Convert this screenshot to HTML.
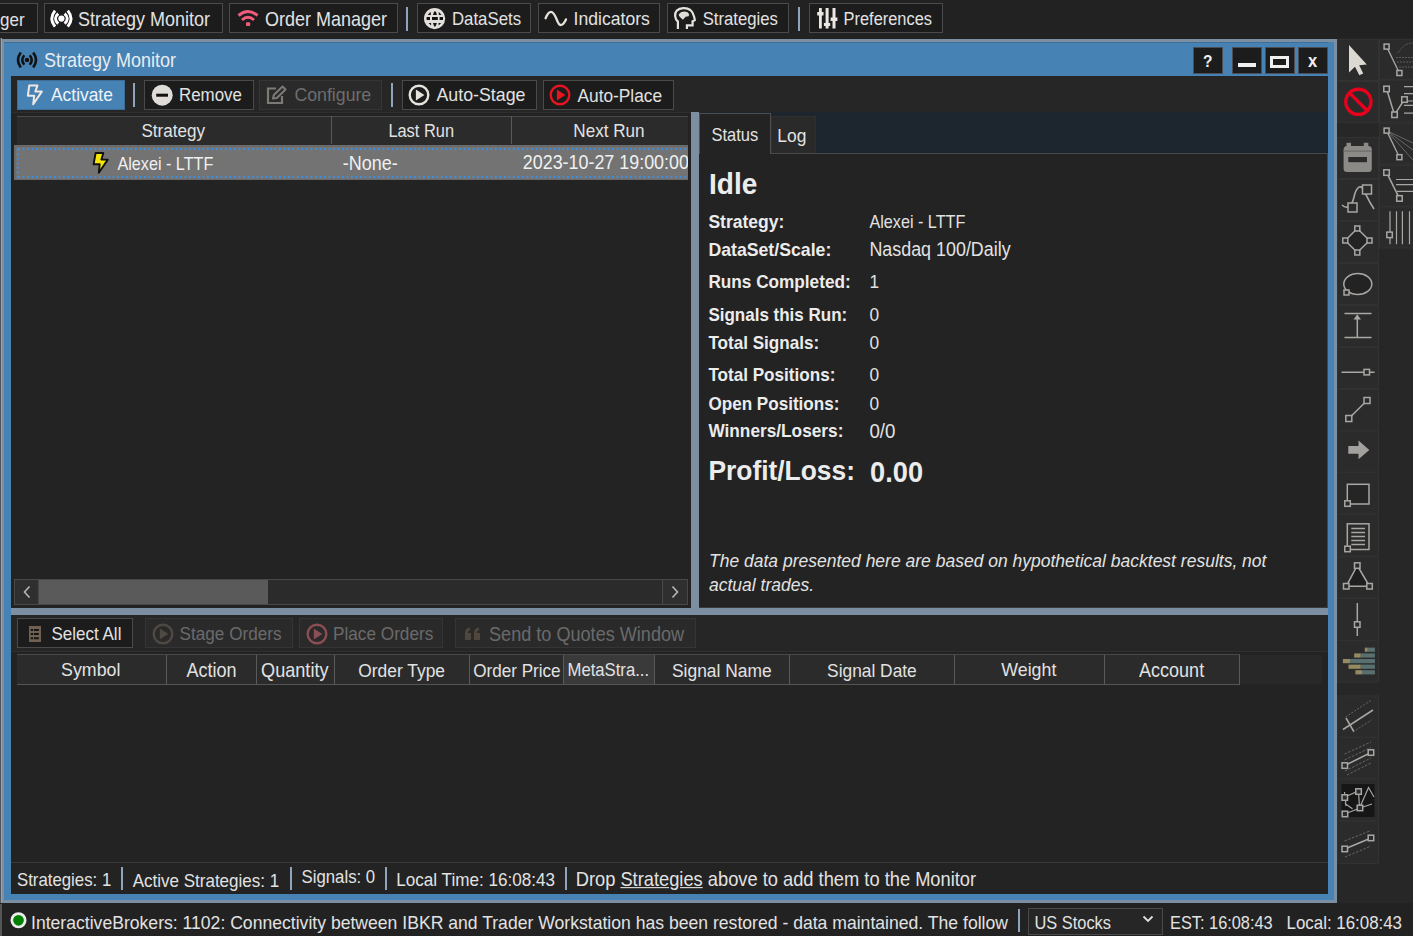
<!DOCTYPE html>
<html><head><meta charset="utf-8">
<style>
*{box-sizing:border-box;margin:0;padding:0}
html,body{width:1413px;height:936px;overflow:hidden;background:#222222;font-family:"Liberation Sans",sans-serif;color:#e2e2e2;font-size:17px}
.a{position:absolute}
.t,.lbl,.val{transform:scaleY(1.08);transform-origin:0 0.13em}
.t{position:absolute;white-space:nowrap;line-height:1}
.btn{position:absolute;background:#1c1c1c;border:1px solid #4a4a4a}
.dis{position:absolute;background:#2a2a2a;border:1px solid #353535}
.sep{position:absolute;width:2px;background:#8fa4bd}
svg{position:absolute;overflow:visible}
.hd{position:absolute;background:#2b2b2b;border-right:1px solid #555}
.lbl{position:absolute;white-space:nowrap;line-height:1;font-weight:bold;font-size:17px;color:#ececec}
.val{position:absolute;white-space:nowrap;line-height:1;font-size:17px;color:#e2e2e2}
</style></head><body>

<!-- ===== top toolbar ===== -->
<div class="btn" style="left:-2px;top:3px;width:40px;height:30px"></div>
<div class="t" style="left:0px;top:10.8px;font-size:17px">ger</div>

<div class="btn" style="left:44px;top:3px;width:179px;height:30px"></div>
<svg style="left:44px;top:3px" width="40" height="30" viewBox="0 0 40 30">
 <circle cx="17.4" cy="15.6" r="3.1" fill="#fff"/>
 <path d="M14.2 10.6 Q8.8 15.6 14.2 20.6 M20.6 10.6 Q26 15.6 20.6 20.6" stroke="#fff" stroke-width="2.9" fill="none"/>
 <path d="M11 7.6 Q4.6 15.6 11 23.6 M23.8 7.6 Q30.2 15.6 23.8 23.6" stroke="#fff" stroke-width="2.9" fill="none"/>
</svg>
<div class="t" style="left:78px;top:9.9px;font-size:18px">Strategy Monitor</div>

<div class="btn" style="left:229px;top:3px;width:169px;height:30px"></div>
<svg style="left:237px;top:10px" width="22" height="16" viewBox="0 0 22 16">
 <path d="M1.5 5.5 Q11 -2.5 20.5 5.5" stroke="#f25c7c" stroke-width="3" fill="none"/>
 <path d="M5 10 Q11 4.5 17 10" stroke="#f25c7c" stroke-width="3" fill="none"/>
 <rect x="9" y="12.3" width="4.2" height="3.6" rx="1" fill="#f25c7c"/>
</svg>
<div class="t" style="left:265px;top:9.9px;font-size:18px">Order Manager</div>

<div class="sep" style="left:406px;top:7px;height:24px"></div>

<div class="btn" style="left:417px;top:3px;width:114px;height:30px"></div>
<svg style="left:417px;top:3px" width="40" height="30" viewBox="0 0 40 30">
 <circle cx="17.6" cy="15.6" r="10.6" fill="#e3e0dc"/>
 <path d="M10.8 11.9 L13.6 8.8 L13.9 11.9 Z M16 11.9 L16.8 9.2 L17.9 7.9 L19.2 9.2 L19.9 11.9 Z M21.6 8.8 L24.6 11.9 L21.9 11.9 Z M9.6 14.1 H13 V17.1 H9.6 Z M15 14.1 H20.8 V17.1 H15 Z M22.6 14.1 H26 V17.1 H22.6 Z M11.6 19.9 H14.1 L14.1 22.4 Z M16 19.9 H19.9 L19 22.5 L17.9 23.9 L16.8 22.5 Z M21.6 19.9 H24.1 L21.6 22.4 Z" fill="#131313"/>
</svg>
<div class="t" style="left:452px;top:11.0px;font-size:16.8px">DataSets</div>

<div class="btn" style="left:538px;top:3px;width:122px;height:30px"></div>
<svg style="left:538px;top:3px" width="40" height="30" viewBox="0 0 40 30">
 <path d="M7.6 15.2 C9.3 11 11 8.9 13.1 8.9 C15.5 8.9 17 12.5 18.5 16 C20 20 21 22 22.6 22 C24.6 22 26.5 19.5 28 16.4" stroke="#e6e3de" stroke-width="2.3" fill="none" stroke-linecap="round"/>
</svg>
<div class="t" style="left:573.6px;top:10.3px;font-size:17.6px">Indicators</div>

<div class="btn" style="left:667px;top:3px;width:122px;height:30px"></div>
<svg style="left:667px;top:3px" width="40" height="30" viewBox="0 0 40 30">
 <path d="M10.9 26 V18.5 C7.6 16 7.2 10.5 9.8 7.6 C12.8 4.6 19.5 4.2 23.3 7 C26.2 9.3 27.2 13 27.8 17.2 L25.6 18.3 V22.4 H19.9 V26" stroke="#e6e3de" stroke-width="2.2" fill="none"/>
 <path d="M11.8 11.3 L14.3 8.9 L17.6 8.4 L20.6 9.3 L22.2 11.4 L21.6 13.2 L18.6 13.7 L16 16.8 L14.2 15.2 L11.9 12.7 Z" fill="#e0ddd8"/>
</svg>
<div class="t" style="left:702.7px;top:11.1px;font-size:16.7px">Strategies</div>

<div class="sep" style="left:798px;top:7px;height:24px"></div>

<div class="btn" style="left:809px;top:3px;width:134px;height:30px"></div>
<svg style="left:816px;top:8px" width="22" height="20" viewBox="0 0 22 20">
 <rect x="3" y="0" width="2.8" height="20.5" fill="#ebe8e3"/>
 <rect x="9.6" y="0" width="3" height="20.5" fill="#ebe8e3"/>
 <rect x="16.5" y="0" width="3" height="20.5" fill="#ebe8e3"/>
 <rect x="1.2" y="4" width="6.3" height="3.5" fill="#ebe8e3"/>
 <rect x="7.9" y="15" width="6.3" height="3" fill="#ebe8e3"/>
 <rect x="14.6" y="9.5" width="6.8" height="3.5" fill="#ebe8e3"/>
</svg>
<div class="t" style="left:843.6px;top:10.4px;font-size:16.4px">Preferences</div>

<!-- ===== window frame ===== -->
<div class="a" style="left:0px;top:38px;width:1px;height:866px;background:#4f555b"></div><div class="a" style="left:1px;top:38px;width:1px;height:866px;background:#98a4b0"></div>
<div class="a" style="left:2px;top:39px;width:1335px;height:864px;background:#7b8ea2"></div>
<div class="a" style="left:4px;top:42px;width:1330px;height:858px;background:#4682b4"></div>
<div class="a" style="left:11px;top:76px;width:1317px;height:818px;background:#232323"></div>
<div class="a" style="left:11px;top:76px;width:1317px;height:36px;background:#262626"></div>
<div class="a" style="left:4px;top:42px;width:1324px;height:1px;background:#3e6e9a"></div>

<!-- title -->
<svg style="left:10px;top:45px" width="40" height="30" viewBox="0 0 40 30">
 <circle cx="17" cy="15" r="2.3" fill="#111"/>
 <path d="M14.3 10.3 Q10.2 15 14.3 19.7 M19.7 10.3 Q23.8 15 19.7 19.7" stroke="#111" stroke-width="2.5" fill="none"/>
 <path d="M10.8 7.5 Q5.2 15 10.8 22.5 M23.2 7.5 Q28.8 15 23.2 22.5" stroke="#111" stroke-width="2.6" fill="none"/>
</svg>
<div class="t" style="left:44px;top:50.9px;font-size:18px;color:#e8ecf0">Strategy Monitor</div>

<div class="btn" style="left:1193px;top:47px;width:30px;height:27px;border:1.5px solid #4b4f55"></div>
<div class="t" style="left:1203px;top:53px;font-size:15.5px;font-weight:bold;color:#f0f0f0">?</div>
<div class="btn" style="left:1232px;top:47px;width:30px;height:27px;border:1.5px solid #4b4f55"></div>
<div class="a" style="left:1238px;top:63px;width:18px;height:4px;background:#f0f0f0"></div>
<div class="btn" style="left:1265px;top:47px;width:30px;height:27px;border:1.5px solid #4b4f55"></div>
<div class="a" style="left:1270px;top:56px;width:19px;height:12px;border:3px solid #f0f0f0"></div>
<div class="btn" style="left:1298px;top:47px;width:30px;height:27px;border:1.5px solid #4b4f55"></div>
<div class="t" style="left:1308px;top:52px;font-size:16.5px;font-weight:bold;color:#f0f0f0">x</div>


<!-- ===== window toolbar ===== -->
<div class="a" style="left:17px;top:80px;width:108px;height:30px;background:#4682b4;border:1.5px solid #3b6d98"></div>
<svg style="left:26px;top:84px" width="18" height="23" viewBox="0 0 18 23">
 <path d="M3.2 1.6 H11.4 L9.3 7.6 H15.8 L7.2 20.3 L8.2 11.7 H1.9 Z" stroke="#efe9e4" stroke-width="2" fill="none" stroke-linejoin="round"/>
</svg>
<div class="t" style="left:51px;top:85.5px;font-size:17.4px;color:#eef2f6">Activate</div>
<div class="sep" style="left:133px;top:83px;height:24px"></div>

<div class="btn" style="left:144px;top:80px;width:110px;height:30px"></div>
<svg style="left:151px;top:84px" width="22" height="22" viewBox="0 0 22 22">
 <circle cx="11.2" cy="11.2" r="10.5" fill="#e0ddd9"/>
 <rect x="5.2" y="9.7" width="11.8" height="3" fill="#111"/>
</svg>
<div class="t" style="left:179px;top:86.9px;font-size:16.9px">Remove</div>

<div class="dis" style="left:259px;top:80px;width:123px;height:30px"></div>
<svg style="left:266px;top:85px" width="22" height="20" viewBox="0 0 22 20">
 <path d="M10 3.5 H2 V18 H16 V11" stroke="#7d7a76" stroke-width="2.2" fill="none"/>
 <path d="M7 13.5 L7.8 10 L16.5 1.5 L19.5 4.5 L10.8 13 Z" stroke="#7d7a76" stroke-width="2" fill="none" stroke-linejoin="round"/>
</svg>
<div class="t" style="left:294.5px;top:86.2px;font-size:17.7px;color:#6e6e6e">Configure</div>
<div class="sep" style="left:391px;top:83px;height:24px"></div>

<div class="btn" style="left:402px;top:80px;width:135px;height:30px"></div>
<svg style="left:408px;top:84px" width="22" height="22" viewBox="0 0 22 22">
 <circle cx="11" cy="11" r="9.3" stroke="#e6e2dc" stroke-width="2.4" fill="none"/>
 <path d="M7.9 5.6 L16.4 11 L7.9 16.4 Z" fill="#e6e2dc"/>
</svg>
<div class="t" style="left:436.5px;top:86.1px;font-size:17.8px">Auto-Stage</div>

<div class="btn" style="left:543px;top:80px;width:131px;height:30px"></div>
<svg style="left:549px;top:84px" width="22" height="22" viewBox="0 0 22 22">
 <circle cx="11" cy="11" r="9.3" stroke="#e8141e" stroke-width="2.4" fill="none"/>
 <path d="M7.9 5.6 L16.4 11 L7.9 16.4 Z" fill="#e8141e"/>
</svg>
<div class="t" style="left:577.5px;top:86.6px;font-size:17.3px">Auto-Place</div>

<div class="a" style="left:11px;top:112px;width:680px;height:1px;background:#2e2e2e"></div>

<!-- ===== left table ===== -->
<div class="a" style="left:11px;top:113px;width:680px;height:495px;background:#232323"></div>
<div class="a" style="left:17px;top:116px;width:671px;height:30px;background:#2b2b2b;border-top:1px solid #4a4a4a;border-bottom:1px solid #555"></div>
<div class="a" style="left:331px;top:116px;width:1px;height:28px;background:#5a5a5a"></div>
<div class="a" style="left:511px;top:116px;width:1px;height:28px;background:#5a5a5a"></div>
<div class="t" style="left:141.4px;top:121.7px;font-size:17.1px">Strategy</div>
<div class="t" style="left:388.4px;top:122.4px;font-size:16.4px">Last Run</div>
<div class="t" style="left:573.3px;top:121.7px;font-size:17.1px">Next Run</div>

<div class="a" style="left:14px;top:145px;width:674px;height:35px;background:#6a6a6a;overflow:hidden">
 <div class="a" style="left:2px;top:2px;width:700px;height:32px;background:#737373;"></div>
 <svg style="left:0;top:0" width="674" height="35"><path d="M4 4 H674 M4 32 H674 M4 4 V32" stroke="#3d8fe6" stroke-width="1.8" stroke-dasharray="1.8 2.7" fill="none"/></svg>
</div>
<svg style="left:91px;top:151px" width="20" height="24" viewBox="0 0 20 24">
 <path d="M4.6 2 H12.3 L10.4 8.6 H16.8 L7.8 21.8 L8.7 13.2 H2.6 Z" fill="#f7e600" stroke="#111" stroke-width="1.9" stroke-linejoin="round"/>
</svg>
<div class="t" style="left:117.4px;top:154.5px;font-size:16.2px;color:#f0f0f0">Alexei - LTTF</div>
<div class="t" style="left:342.7px;top:153.9px;font-size:18px;color:#f0f0f0">-None-</div>
<div style="position:absolute;left:511px;top:146px;width:177px;height:32px;overflow:hidden">
 <div class="t" style="left:11.8px;top:8.2px;font-size:17.9px;color:#f0f0f0">2023-10-27 19:00:00</div>
</div>

<!-- scrollbar -->
<div class="a" style="left:14px;top:579px;width:674px;height:26px;background:#2b2b2b;border:1px solid #484848"></div>
<div class="a" style="left:15px;top:580px;width:24px;height:24px;background:#2f2f2f;border-right:1px solid #484848"></div>
<div class="a" style="left:39px;top:580px;width:229px;height:24px;background:#5a5a5a"></div>
<div class="a" style="left:662px;top:580px;width:25px;height:24px;background:#2f2f2f;border-left:1px solid #484848"></div>
<svg style="left:22px;top:585px" width="10" height="14" viewBox="0 0 10 14"><path d="M7.5 1.5 L2.5 7 L7.5 12.5" stroke="#b9b9b9" stroke-width="1.6" fill="none"/></svg>
<svg style="left:670px;top:585px" width="10" height="14" viewBox="0 0 10 14"><path d="M2.5 1.5 L7.5 7 L2.5 12.5" stroke="#b9b9b9" stroke-width="1.6" fill="none"/></svg>

<!-- vertical splitter -->
<div class="a" style="left:691px;top:112px;width:8px;height:496px;background:#7b8ea2"></div>

<!-- ===== right pane ===== -->
<div class="a" style="left:699px;top:112px;width:629px;height:42px;background:#1d262f"></div>
<div class="a" style="left:699px;top:153px;width:629px;height:455px;background:#232323;border-top:1px solid #4a4a4a;border-right:1px solid #474747;border-bottom:1px solid #3a3a3a"></div>
<div class="a" style="left:699px;top:113px;width:72px;height:41px;background:#232323;border:1px solid #4f4f4f;border-bottom:none"></div>
<div class="a" style="left:771px;top:116px;width:45px;height:37px;background:#2a2a2a;border:1px solid #2f2f2f;border-bottom:none"></div>
<div class="t" style="left:711.5px;top:125.6px;font-size:16.5px">Status</div>
<div class="t" style="left:777.3px;top:126.5px;font-size:17.4px">Log</div>

<div class="t" style="left:709px;top:168.6px;font-size:28px;font-weight:bold;color:#ececec">Idle</div>
<div class="lbl" style="left:708.4px;top:212.7px;font-size:17.5px">Strategy:</div>
<div class="val" style="left:869.4px;top:212.7px;font-size:16.2px">Alexei - LTTF</div>
<div class="lbl" style="left:708.4px;top:241.2px;font-size:17.7px">DataSet/Scale:</div>
<div class="val" style="left:869.4px;top:241.2px;font-size:17.9px">Nasdaq 100/Daily</div>
<div class="lbl" style="left:708.4px;top:273.4px;font-size:17.2px">Runs Completed:</div>
<div class="val" style="left:869.4px;top:273.4px;font-size:17.3px">1</div>
<div class="lbl" style="left:708.4px;top:306.3px;font-size:17px">Signals this Run:</div>
<div class="val" style="left:869.4px;top:306.3px;font-size:17.3px">0</div>
<div class="lbl" style="left:708.4px;top:334.3px;font-size:17.1px">Total Signals:</div>
<div class="val" style="left:869.4px;top:334.3px;font-size:17.3px">0</div>
<div class="lbl" style="left:708.4px;top:365.7px;font-size:17.1px">Total Positions:</div>
<div class="val" style="left:869.4px;top:365.7px;font-size:17.3px">0</div>
<div class="lbl" style="left:708.4px;top:394.5px;font-size:17.1px">Open Positions:</div>
<div class="val" style="left:869.4px;top:394.5px;font-size:17.3px">0</div>
<div class="lbl" style="left:708.4px;top:422px;font-size:17.25px">Winners/Losers:</div>
<div class="val" style="left:869.4px;top:422px;font-size:18.7px">0/0</div>
<div class="lbl" style="left:708.4px;top:456.6px;font-size:26.4px">Profit/Loss:</div>
<div class="lbl" style="left:870.1px;top:456.6px;font-size:27.2px">0.00</div>

<div class="t" style="left:709px;top:551.9px;font-size:17.5px;font-style:italic">The data presented here are based on hypothetical backtest results, not</div>
<div class="t" style="left:709px;top:576.2px;font-size:17.5px;font-style:italic">actual trades.</div>

<!-- horizontal splitter -->
<div class="a" style="left:11px;top:608px;width:1317px;height:7px;background:#7b8ea2"></div>

<!-- ===== bottom pane ===== -->
<div class="a" style="left:11px;top:615px;width:1317px;height:36px;background:#262626"></div>
<div class="btn" style="left:17px;top:618px;width:116px;height:30px"></div>
<svg style="left:27px;top:624px" width="16" height="20" viewBox="0 0 16 20">
 <rect x="2" y="2" width="12" height="16" fill="#6f604f"/>
 <path d="M3.7 5.9 h2.4 M7 5.9 h4.8 M3.7 9.9 h2.4 M7 9.9 h4.8 M3.7 14.2 h2.4 M7 14.2 h4.8" stroke="#141414" stroke-width="2"/>
</svg>
<div class="t" style="left:51.5px;top:624.8px;font-size:17px">Select All</div>

<div class="dis" style="left:145px;top:618px;width:148px;height:30px"></div>
<svg style="left:152px;top:623px" width="22" height="22" viewBox="0 0 22 22">
 <circle cx="11" cy="11" r="9.3" stroke="#4f4943" stroke-width="2.4" fill="none"/>
 <path d="M7.8 5.6 L16.3 11 L7.8 16.4 Z" fill="#4f4943"/>
</svg>
<div class="t" style="left:179.6px;top:624.7px;font-size:17.15px;color:#6a6a6a">Stage Orders</div>

<div class="dis" style="left:299px;top:618px;width:144px;height:30px"></div>
<svg style="left:306px;top:623px" width="22" height="22" viewBox="0 0 22 22">
 <circle cx="11" cy="11" r="9.3" stroke="#8a4e54" stroke-width="2.4" fill="none"/>
 <path d="M7.8 5.6 L16.3 11 L7.8 16.4 Z" fill="#8a4e54"/>
</svg>
<div class="t" style="left:333px;top:624.6px;font-size:17.2px;color:#6a6a6a">Place Orders</div>

<div class="dis" style="left:455px;top:618px;width:241px;height:30px"></div>
<svg style="left:464px;top:627px" width="20" height="14" viewBox="0 0 20 14">
 <path d="M1 13 V6 Q1 1 6 0.5 V3 Q3.8 3.5 3.8 6 H7 V13 Z M10 13 V6 Q10 1 15 0.5 V3 Q12.8 3.5 12.8 6 H16 V13 Z" fill="#4f473d"/>
</svg>
<div class="t" style="left:489px;top:624.8px;font-size:18.1px;color:#6a6a6a">Send to Quotes Window</div>

<div class="a" style="left:11px;top:651px;width:1317px;height:1px;background:#2f2f2f"></div>

<!-- grid header -->
<div class="a" style="left:17px;top:655px;width:1305px;height:29px;background:#282828"></div>
<div class="a" style="left:17px;top:654px;width:1223px;height:31px;background:#2b2b2b;border-top:1px solid #4a4a4a;border-bottom:1px solid #555"></div>
<div class="a" style="left:564px;top:655px;width:90px;height:29px;background:#3a3a3a"></div>
<div class="a" style="left:166px;top:655px;width:1px;height:29px;background:#5a5a5a"></div>
<div class="a" style="left:256px;top:655px;width:1px;height:29px;background:#5a5a5a"></div>
<div class="a" style="left:334px;top:655px;width:1px;height:29px;background:#5a5a5a"></div>
<div class="a" style="left:469px;top:655px;width:1px;height:29px;background:#5a5a5a"></div>
<div class="a" style="left:563px;top:655px;width:1px;height:29px;background:#5a5a5a"></div>
<div class="a" style="left:654px;top:655px;width:1px;height:29px;background:#5a5a5a"></div>
<div class="a" style="left:789px;top:655px;width:1px;height:29px;background:#5a5a5a"></div>
<div class="a" style="left:954px;top:655px;width:1px;height:29px;background:#5a5a5a"></div>
<div class="a" style="left:1104px;top:655px;width:1px;height:29px;background:#5a5a5a"></div>
<div class="a" style="left:1239px;top:655px;width:1px;height:29px;background:#5a5a5a"></div>
<div class="t" style="left:61.1px;top:661.1px;font-size:17.8px">Symbol</div>
<div class="t" style="left:186.5px;top:660.9px;font-size:18px">Action</div>
<div class="t" style="left:261.1px;top:660.8px;font-size:18.1px">Quantity</div>
<div class="t" style="left:358.3px;top:661.5px;font-size:17.4px">Order Type</div>
<div class="t" style="left:473.2px;top:661.7px;font-size:17.1px">Order Price</div>
<div class="t" style="left:567.5px;top:662.1px;font-size:16.7px">MetaStra...</div>
<div class="t" style="left:672px;top:661.5px;font-size:17.4px">Signal Name</div>
<div class="t" style="left:827.1px;top:661.5px;font-size:17.35px">Signal Date</div>
<div class="t" style="left:1001.3px;top:661.1px;font-size:17.8px">Weight</div>
<div class="t" style="left:1139.1px;top:660.9px;font-size:18px">Account</div>

<!-- window status bar -->
<div class="a" style="left:11px;top:862px;width:1317px;height:32px;background:#232323;border-top:1px solid #3a3a3a"></div>
<div class="t" style="left:17px;top:872.0px;font-size:16.8px">Strategies: 1</div>
<div class="sep" style="left:121px;top:867px;height:23px"></div>
<div class="t" style="left:132.7px;top:871.8px;font-size:17px">Active Strategies: 1</div>
<div class="sep" style="left:290px;top:867px;height:23px"></div>
<div class="t" style="left:301.5px;top:869.0px;font-size:16.8px">Signals: 0</div>
<div class="sep" style="left:385px;top:867px;height:23px"></div>
<div class="t" style="left:396.3px;top:870.7px;font-size:17.1px">Local Time: 16:08:43</div>
<div class="sep" style="left:564.5px;top:867px;height:23px"></div>
<div class="t" style="left:575.7px;top:869.6px;font-size:18.3px">Drop <span style="text-decoration:underline">Strategies</span> above to add them to the Monitor</div>


<!-- ===== right toolbar ===== -->
<div class="a" style="left:1337px;top:39px;width:76px;height:864px;background:#272727"></div>
<svg style="left:0;top:0" width="1413" height="936" viewBox="0 0 1413 936"><rect x="1337.5" y="39.3" width="41" height="41.2" fill="#2b2b2b" stroke="#323232" stroke-width="1"/><rect x="1337.5" y="81.5" width="41" height="40.9" fill="#2b2b2b" stroke="#323232" stroke-width="1"/><rect x="1337.5" y="137.5" width="41" height="41.0" fill="#2b2b2b" stroke="#323232" stroke-width="1"/><rect x="1337.5" y="179.5" width="41" height="41.0" fill="#2b2b2b" stroke="#323232" stroke-width="1"/><rect x="1337.5" y="221.3" width="41" height="41.0" fill="#2b2b2b" stroke="#323232" stroke-width="1"/><rect x="1337.5" y="263.5" width="41" height="41.0" fill="#2b2b2b" stroke="#323232" stroke-width="1"/><rect x="1337.5" y="305.8" width="41" height="41.0" fill="#2b2b2b" stroke="#323232" stroke-width="1"/><rect x="1337.5" y="347.5" width="41" height="41.0" fill="#2b2b2b" stroke="#323232" stroke-width="1"/><rect x="1337.5" y="389.4" width="41" height="41.2" fill="#2b2b2b" stroke="#323232" stroke-width="1"/><rect x="1337.5" y="430.8" width="41" height="41.4" fill="#2b2b2b" stroke="#323232" stroke-width="1"/><rect x="1337.5" y="472.3" width="41" height="41.7" fill="#2b2b2b" stroke="#323232" stroke-width="1"/><rect x="1337.5" y="514.2" width="41" height="41.8" fill="#2b2b2b" stroke="#323232" stroke-width="1"/><rect x="1337.5" y="557" width="41" height="41.2" fill="#2b2b2b" stroke="#323232" stroke-width="1"/><rect x="1337.5" y="598.4" width="41" height="42.0" fill="#2b2b2b" stroke="#323232" stroke-width="1"/><rect x="1337.5" y="640.6" width="41" height="41.6" fill="#2b2b2b" stroke="#323232" stroke-width="1"/><rect x="1337.5" y="695.9" width="41" height="41.3" fill="#2b2b2b" stroke="#323232" stroke-width="1"/><rect x="1337.5" y="737.4" width="41" height="41.4" fill="#2b2b2b" stroke="#323232" stroke-width="1"/><rect x="1337.5" y="779" width="41" height="42.0" fill="#2b2b2b" stroke="#323232" stroke-width="1"/><rect x="1337.5" y="821.2" width="41" height="42.3" fill="#2b2b2b" stroke="#323232" stroke-width="1"/><rect x="1379.5" y="39.3" width="40" height="40.3" fill="#2b2b2b" stroke="#323232" stroke-width="1"/><rect x="1379.5" y="80.2" width="40" height="41.8" fill="#2b2b2b" stroke="#323232" stroke-width="1"/><rect x="1379.5" y="123.3" width="40" height="40.9" fill="#2b2b2b" stroke="#323232" stroke-width="1"/><rect x="1379.5" y="165.3" width="40" height="41.2" fill="#2b2b2b" stroke="#323232" stroke-width="1"/><rect x="1379.5" y="206.8" width="40" height="41.2" fill="#2b2b2b" stroke="#323232" stroke-width="1"/><path d="M1349 45 L1349 72.5 L1355 66.8 L1359.3 75.2 L1363.2 73.4 L1359.2 65.2 L1366.8 64.6 Z" fill="#dcd8d2"/><circle cx="1358.4" cy="101.8" r="12.6" stroke="#e8001c" stroke-width="3.4" fill="none"/><path d="M1349.5 92.9 L1367.3 110.7" stroke="#e8001c" stroke-width="3.4"/><rect x="1343.6" y="146" width="28.2" height="26" rx="3.5" fill="#8c8a87"/><rect x="1346.5" y="142.8" width="4.5" height="5" fill="#8c8a87"/><rect x="1363.8" y="142.8" width="4.5" height="5" fill="#8c8a87"/><rect x="1348.3" y="157" width="18.7" height="5.2" fill="#2b2b2b"/><rect x="1343.6" y="150.5" width="28.2" height="1.2" fill="#6d6b68"/><path d="M1342 205 C1347 210 1352 206 1354 197 C1356 188 1360 184 1363 189 C1366 194 1368 200 1374 209" stroke="#a9a7a4" stroke-width="1.6" fill="none"/><rect x="1348.0" y="203.0" width="9" height="9" fill="#2b2b2b" stroke="#a9a7a4" stroke-width="1.5"/><rect x="1362.5" y="185.0" width="9" height="9" fill="#2b2b2b" stroke="#a9a7a4" stroke-width="1.5"/><path d="M1357.3 228.5 L1369.5 240.5 L1357.3 252.5 L1345.3 240.5 Z" fill="#232323" stroke="#a9a7a4" stroke-width="1.5"/><rect x="1354.8" y="226.0" width="5" height="5" fill="#2b2b2b" stroke="#a9a7a4" stroke-width="1.5"/><rect x="1367.0" y="238.0" width="5" height="5" fill="#2b2b2b" stroke="#a9a7a4" stroke-width="1.5"/><rect x="1354.8" y="250.0" width="5" height="5" fill="#2b2b2b" stroke="#a9a7a4" stroke-width="1.5"/><rect x="1342.8" y="238.0" width="5" height="5" fill="#2b2b2b" stroke="#a9a7a4" stroke-width="1.5"/><ellipse cx="1357.8" cy="284" rx="14" ry="10.5" fill="#232323" stroke="#a9a7a4" stroke-width="1.5"/><rect x="1344.0" y="290.0" width="5" height="5" fill="#2b2b2b" stroke="#a9a7a4" stroke-width="1.5"/><path d="M1344.5 313.5 H1371.5 M1344.5 337.5 H1371.5 M1357.3 315 V337.5" stroke="#a9a7a4" stroke-width="1.5" fill="none"/><path d="M1353.5 319.5 L1357.3 314.5 L1361 319.5 Z" fill="#a9a7a4"/><path d="M1341.5 372.2 H1374.6" stroke="#a9a7a4" stroke-width="1.5"/><rect x="1364.0" y="369.4" width="5.5" height="5.5" fill="#2b2b2b" stroke="#a9a7a4" stroke-width="1.5"/><path d="M1348.8 418.5 L1367 400.5" stroke="#a9a7a4" stroke-width="1.5"/><rect x="1345.8" y="415.5" width="6" height="6" fill="#2b2b2b" stroke="#a9a7a4" stroke-width="1.5"/><rect x="1364.0" y="397.5" width="6" height="6" fill="#2b2b2b" stroke="#a9a7a4" stroke-width="1.5"/><path d="M1348.3 446 H1358.5 V440.5 L1369.3 450 L1358.5 459.3 V453.8 H1348.3 Z" fill="#a3a19e"/><rect x="1347.3" y="484.3" width="21.7" height="19.7" fill="#252525" stroke="#a9a7a4" stroke-width="1.5"/><rect x="1344.8" y="500.8" width="5.5" height="5.5" fill="#2b2b2b" stroke="#a9a7a4" stroke-width="1.5"/><rect x="1347.3" y="523.8" width="21.7" height="25.7" fill="#2b2b2b" stroke="#a9a7a4" stroke-width="1.5"/><path d="M1351.3 528.5 H1365 M1351.3 532.5 H1365 M1351.3 536.5 H1365 M1351.3 540.5 H1365 M1351.3 544.5 H1365" stroke="#a9a7a4" stroke-width="1.4"/><rect x="1344.8" y="546.2" width="5.5" height="5.5" fill="#2b2b2b" stroke="#a9a7a4" stroke-width="1.5"/><path d="M1357.3 565.5 L1369.5 586.3 L1346.2 586.3 Z" fill="#1e1e1e" stroke="#a9a7a4" stroke-width="1.5"/><rect x="1354.5" y="562.8" width="5.5" height="5.5" fill="#2b2b2b" stroke="#a9a7a4" stroke-width="1.5"/><rect x="1343.5" y="583.5" width="5.5" height="5.5" fill="#2b2b2b" stroke="#a9a7a4" stroke-width="1.5"/><rect x="1366.8" y="583.5" width="5.5" height="5.5" fill="#2b2b2b" stroke="#a9a7a4" stroke-width="1.5"/><path d="M1357.3 603 V636" stroke="#a9a7a4" stroke-width="1.5"/><rect x="1354.5" y="621.8" width="5.5" height="5.5" fill="#2b2b2b" stroke="#a9a7a4" stroke-width="1.5"/><path d="M1343 729.5 L1373 710" stroke="#a9a7a4" stroke-width="1.5"/><path d="M1345.5 717 L1371.5 700" stroke="#666" stroke-width="1" stroke-dasharray="2 1.5"/><path d="M1353 732 L1371.5 720" stroke="#666" stroke-width="1" stroke-dasharray="2 1.5"/><path d="M1346 718 L1353.8 731.5" stroke="#a9a7a4" stroke-width="1.5"/><path d="M1344.8 765.5 L1371 752.5" stroke="#a9a7a4" stroke-width="1.5"/><path d="M1344.5 760 L1371 747.5 M1345 771 L1371 758 M1344.5 754 L1371 742 M1347 775 L1371 763" stroke="#666" stroke-width="1" stroke-dasharray="2.5 1.5"/><rect x="1342.0" y="762.8" width="5.5" height="5.5" fill="#2b2b2b" stroke="#a9a7a4" stroke-width="1.5"/><rect x="1368.2" y="749.8" width="5.5" height="5.5" fill="#2b2b2b" stroke="#a9a7a4" stroke-width="1.5"/><rect x="1341.5" y="784" width="33" height="33" fill="#161616"/><path d="M1344.8 803.5 L1352.5 808.8 M1344.8 797 L1358.5 791 L1359.5 808 L1368.5 787.5 L1374 797 M1344.5 792 L1346 806 M1344.8 814 L1360 808 L1372 804" stroke="#a9a7a4" stroke-width="1.2" fill="none"/><rect x="1342.0" y="794.8" width="5.5" height="5.5" fill="#2b2b2b" stroke="#a9a7a4" stroke-width="1.5"/><rect x="1355.8" y="788.8" width="5.5" height="5.5" fill="#2b2b2b" stroke="#a9a7a4" stroke-width="1.5"/><rect x="1357.2" y="805.2" width="5.5" height="5.5" fill="#2b2b2b" stroke="#a9a7a4" stroke-width="1.5"/><rect x="1342.2" y="811.2" width="5.5" height="5.5" fill="#2b2b2b" stroke="#a9a7a4" stroke-width="1.5"/><path d="M1344.8 849 L1371 838" stroke="#a9a7a4" stroke-width="1.5"/><path d="M1344.5 841 L1371 830.5 M1345 857 L1371 846" stroke="#666" stroke-width="1" stroke-dasharray="2.5 1.5"/><rect x="1342.0" y="846.2" width="5.5" height="5.5" fill="#2b2b2b" stroke="#a9a7a4" stroke-width="1.5"/><rect x="1368.2" y="835.2" width="5.5" height="5.5" fill="#2b2b2b" stroke="#a9a7a4" stroke-width="1.5"/><path d="M1386.6 46.6 L1399.4 73" stroke="#a9a7a4" stroke-width="1.3"/><path d="M1398 53 Q1404 43 1413 43 M1396 57.5 H1413 M1397 62 H1413 M1399 67 H1413" stroke="#5c5c5c" stroke-width="1" stroke-dasharray="2 1" fill="none"/><rect x="1384.1" y="44.1" width="5" height="5" fill="#2b2b2b" stroke="#a9a7a4" stroke-width="1.5"/><rect x="1396.9" y="70.5" width="5" height="5" fill="#2b2b2b" stroke="#a9a7a4" stroke-width="1.5"/><path d="M1386.6 89 L1394.5 114.8 L1404.4 99.5" stroke="#a9a7a4" stroke-width="1.5" fill="none"/><path d="M1404 86.6 H1413 M1404 93.6 H1413 M1407 101 H1413 M1404 105.4 H1413 M1404 113.2 H1413" stroke="#a9a7a4" stroke-width="1.2"/><rect x="1383.8" y="86.2" width="5.5" height="5.5" fill="#2b2b2b" stroke="#a9a7a4" stroke-width="1.5"/><rect x="1391.8" y="112.0" width="5.5" height="5.5" fill="#2b2b2b" stroke="#a9a7a4" stroke-width="1.5"/><rect x="1401.7" y="96.8" width="5.5" height="5.5" fill="#2b2b2b" stroke="#a9a7a4" stroke-width="1.5"/><path d="M1386.6 130.6 L1399.4 157.2" stroke="#a9a7a4" stroke-width="1.3"/><path d="M1386.6 130.6 L1413 143 M1386.6 130.6 L1413 150 M1386.6 130.6 L1413 160" stroke="#666" stroke-width="1"/><rect x="1384.1" y="128.1" width="5" height="5" fill="#2b2b2b" stroke="#a9a7a4" stroke-width="1.5"/><rect x="1396.9" y="154.7" width="5" height="5" fill="#2b2b2b" stroke="#a9a7a4" stroke-width="1.5"/><path d="M1386.6 172.5 L1399.4 198.4" stroke="#a9a7a4" stroke-width="1.6"/><path d="M1396 179.5 H1413 M1396 184.7 H1413 M1397 191.3 H1413" stroke="#a9a7a4" stroke-width="1.2"/><rect x="1383.8" y="169.8" width="5.5" height="5.5" fill="#2b2b2b" stroke="#a9a7a4" stroke-width="1.5"/><rect x="1396.7" y="195.7" width="5.5" height="5.5" fill="#2b2b2b" stroke="#a9a7a4" stroke-width="1.5"/><path d="M1390 211.3 V244.2 M1396.5 211.3 V244.2 M1402.4 211.3 V244.2 M1409.5 211.3 V244.2" stroke="#a9a7a4" stroke-width="1.2"/><rect x="1386.8" y="232.1" width="5.5" height="5.5" fill="#2b2b2b" stroke="#a9a7a4" stroke-width="1.5"/><rect x="1364.8" y="647.6" width="3.0" height="4.2" fill="#958a62"/><rect x="1367.8" y="647.6" width="7.1" height="4.2" fill="#587070"/><rect x="1354.2" y="653.4" width="6.6" height="4.2" fill="#958a62"/><rect x="1360.8" y="653.4" width="14.1" height="4.2" fill="#587070"/><rect x="1342.9" y="659" width="7.1" height="4.2" fill="#958a62"/><rect x="1350" y="659" width="24.9" height="4.2" fill="#587070"/><rect x="1348.5" y="664.6" width="12.3" height="4.2" fill="#958a62"/><rect x="1360.8" y="664.6" width="14.1" height="4.2" fill="#587070"/><rect x="1355.4" y="670.2" width="6.6" height="4.2" fill="#958a62"/><rect x="1362" y="670.2" width="12.9" height="4.2" fill="#587070"/></svg>
<!-- ===== main status bar ===== -->
<div class="a" style="left:0px;top:903px;width:1413px;height:33px;background:#222222"></div>
<div class="a" style="left:0px;top:904px;width:2px;height:32px;background:#555"></div>
<svg style="left:9px;top:911px" width="18" height="18" viewBox="0 0 18 18">
 <circle cx="9.5" cy="9.3" r="6.7" stroke="#ececec" stroke-width="2.7" fill="#008000"/>
</svg>
<div class="t" style="left:31px;top:914.3px;font-size:17.6px">InteractiveBrokers: 1102: Connectivity between IBKR and Trader Workstation has been restored - data maintained. The follow</div>
<div class="a" style="left:1011px;top:904px;width:6px;height:32px;background:#222222"></div>
<div class="sep" style="left:1018px;top:909px;height:23px"></div>
<div class="a" style="left:1028px;top:908px;width:135px;height:27px;background:#262626;border:1px solid #4a4a4a"></div>
<div class="t" style="left:1034.5px;top:914.4px;font-size:16.4px">US Stocks</div>
<svg style="left:1142px;top:915px" width="12" height="8" viewBox="0 0 12 8"><path d="M1.5 1.5 L6 6 L10.5 1.5" stroke="#e0e0e0" stroke-width="1.8" fill="none"/></svg>
<div class="t" style="left:1170px;top:914.4px;font-size:16.35px">EST: 16:08:43</div>
<div class="t" style="left:1286.5px;top:914.9px;font-size:16.9px">Local: 16:08:43</div>

</body></html>
